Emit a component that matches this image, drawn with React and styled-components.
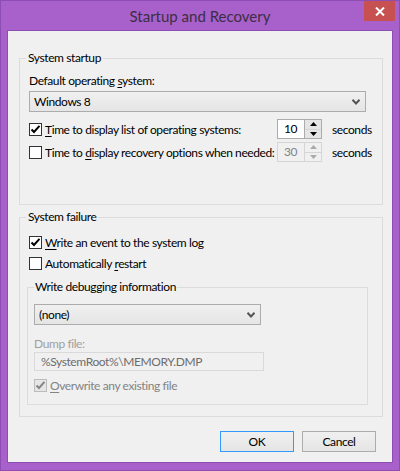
import styled, { createGlobalStyle } from 'styled-components'

const GlobalStyle = createGlobalStyle`
  html, body {
    margin: 0;
    padding: 0;
    background: #a860cb;
  }
  body {
    font-family: 'Segoe UI', Lato, 'Noto Sans', sans-serif;
    font-size: 12px;
    color: #000;
  }
`

const Frame = styled.div`
  width: 400px;
  height: 471px;
  box-sizing: border-box;
  background: #a860cb;
  border: 1px solid #8e4db2;
  padding: 0 6px 7px;
  display: flex;
  flex-direction: column;
`

const TitleBar = styled.div`
  height: 29px;
  position: relative;
  display: flex;
  align-items: center;
  justify-content: center;
`

const Title = styled.span`
  font-size: 15px;
  color: #3a2f42;
  margin-top: 1px;
`

const CloseButton = styled.div`
  position: absolute;
  top: 0;
  right: -2px;
  width: 31px;
  height: 20px;
  background: #c75050;
  display: flex;
  align-items: center;
  justify-content: center;
`

const Client = styled.div`
  flex: 1;
  background: #f0f0f0;
  border: 1px solid #8e4db2;
  padding: 20px 9px 0 11px;
  display: flex;
  flex-direction: column;
  letter-spacing: -0.4px;
`

const Group = styled.fieldset`
  margin: ${p => p.$margin || '0'};
  padding: ${p => p.$pad};
  border: 1px solid #dcdcdc;
  min-width: 0;
  display: flex;
  flex-direction: column;
`

const Legend = styled.legend`
  font-size: 12px;
  line-height: 14px;
  padding: 0 ${p => p.$padX || '2px'};
  margin-left: ${p => p.$shift || '0'};
`

const Text = styled.div`
  line-height: ${p => p.$lh || '15px'};
  margin-top: ${p => p.$mt || '0'};
  color: ${p => (p.$disabled ? '#a0a0a0' : '#000')};
  white-space: nowrap;
`

const Combo = styled.div`
  box-sizing: border-box;
  width: ${p => p.$w};
  height: 21px;
  margin-top: ${p => p.$mt || '0'};
  border: 1px solid #acacac;
  background: linear-gradient(#f0f0f0, #e5e5e5);
  display: flex;
  align-items: center;
  justify-content: space-between;
  padding: 0 5px 0 4px;
  line-height: 15px;
`

const Row = styled.div`
  display: flex;
  align-items: center;
  height: ${p => p.$h || '15px'};
  margin-top: ${p => p.$mt || '0'};
  white-space: nowrap;
`

const Box = styled.span`
  box-sizing: border-box;
  width: 13px;
  height: 13px;
  flex: none;
  border: 1px solid ${p => (p.$disabled ? '#bcbcbc' : '#333')};
  background: ${p => (p.$disabled ? '#e6e6e6' : '#fff')};
  display: flex;
  align-items: center;
  justify-content: center;
`

const CheckLabel = styled.span`
  margin-left: 3px;
  line-height: 15px;
  width: ${p => p.$w || 'auto'};
  flex: none;
  color: ${p => (p.$disabled ? '#838383' : '#000')};
`

const Key = styled.u`
  text-decoration-thickness: 1px;
  text-underline-offset: 2px;
`

const Spinner = styled.div`
  box-sizing: border-box;
  width: 45px;
  height: 20px;
  flex: none;
  border: 1px solid ${p => (p.$disabled ? '#d5d5d5' : '#acacac')};
  background: ${p => (p.$disabled ? '#f0f0f0' : '#fff')};
  display: flex;
`

const SpinValue = styled.span`
  flex: 1;
  padding-left: 6px;
  line-height: 18px;
  color: ${p => (p.$disabled ? '#838383' : '#000')};
`

const SpinButtons = styled.div`
  width: 16px;
  display: flex;
  flex-direction: column;
  background: ${p => (p.$disabled ? '#f0f0f0' : '#e5e5e5')};
  border-left: 1px solid ${p => (p.$disabled ? '#d5d5d5' : '#acacac')};
`

const SpinButton = styled.div`
  flex: 1;
  display: flex;
  align-items: center;
  justify-content: center;
  & + & {
    border-top: 1px solid ${p => (p.$disabled ? '#d5d5d5' : '#acacac')};
  }
`

const Unit = styled.span`
  margin-left: 10px;
  line-height: 15px;
`

const Field = styled.div`
  box-sizing: border-box;
  width: 230px;
  height: 19px;
  margin-top: 1px;
  border: 1px solid #d9d9d9;
  background: #f0f0f0;
  color: #6d6d6d;
  line-height: 17px;
  padding-left: 6px;
`

const Buttons = styled.div`
  display: flex;
  justify-content: flex-end;
  gap: 8px;
  margin: 14px 7px 0 0;
`

const Button = styled.div`
  box-sizing: border-box;
  width: 74px;
  height: 21px;
  border: 1px solid ${p => (p.$default ? '#3399ff' : '#acacac')};
  background: linear-gradient(#f0f0f0, #e5e5e5);
  display: flex;
  align-items: center;
  justify-content: center;
  line-height: 15px;
`

const Check = ({ disabled }) => (
  <Box $disabled={disabled}>
    <svg width="11" height="11" viewBox="0 0 11 11">
      <path d="M1.5 5.5 L4 8 L9.5 1.8" fill="none" stroke={disabled ? '#858585' : '#000'} strokeWidth="2" />
    </svg>
  </Box>
)

const Chevron = () => (
  <svg width="8" height="6" viewBox="0 0 8 6">
    <path d="M0.5 0.8 L4 4.5 L7.5 0.8" fill="none" stroke="#555" strokeWidth="2" />
  </svg>
)

const Arrow = ({ up, disabled }) => (
  <svg width="7" height="4" viewBox="0 0 7 4">
    <path d={up ? 'M0 4 L3.5 0 L7 4 Z' : 'M0 0 L3.5 4 L7 0 Z'} fill={disabled ? '#aaa' : '#000'} />
  </svg>
)

const Spin = ({ value, disabled }) => (
  <Spinner $disabled={disabled}>
    <SpinValue $disabled={disabled}>{value}</SpinValue>
    <SpinButtons $disabled={disabled}>
      <SpinButton $disabled={disabled}><Arrow up disabled={disabled} /></SpinButton>
      <SpinButton $disabled={disabled}><Arrow disabled={disabled} /></SpinButton>
    </SpinButtons>
  </Spinner>
)

export default function App() {
  return (
    <>
      <GlobalStyle />
      <Frame>
        <TitleBar>
          <Title>Startup and Recovery</Title>
          <CloseButton>
            <svg width="10" height="9" viewBox="0 0 10 9">
              <path d="M1 0.5 L9 8.5 M9 0.5 L1 8.5" stroke="#fff" strokeWidth="2" />
            </svg>
          </CloseButton>
        </TitleBar>
        <Client>
          <Group $pad="8px 16px 42px 9px">
            <Legend $shift="-3px">System startup</Legend>
            <Text>Default operating <Key>s</Key>ystem:</Text>
            <Combo $w="337px" $mt="3px">
              <span>Windows 8</span>
              <Chevron />
            </Combo>
            <Row $h="20px" $mt="7px">
              <Check />
              <CheckLabel $w="232px"><Key>T</Key>ime to display list of operating systems:</CheckLabel>
              <Spin value="10" />
              <Unit>seconds</Unit>
            </Row>
            <Row $h="20px" $mt="3px">
              <Box />
              <CheckLabel $w="232px">Time to <Key>d</Key>isplay recovery options when needed:</CheckLabel>
              <Spin value="30" disabled />
              <Unit>seconds</Unit>
            </Row>
          </Group>
          <Group $margin="5px 0 0" $pad="11px 14px 11px 9px">
            <Legend $shift="-3px">System failure</Legend>
            <Row>
              <Check />
              <CheckLabel><Key>W</Key>rite an event to the system log</CheckLabel>
            </Row>
            <Row $mt="6px">
              <Box />
              <CheckLabel>Automatically <Key>r</Key>estart</CheckLabel>
            </Row>
            <Group $margin="9px 0 0 -2px" $pad="10px 6px 11px 6px">
              <Legend $padX="1px">Write debugging information</Legend>
              <Combo $w="227px">
                <span>(none)</span>
                <Chevron />
              </Combo>
              <Text $disabled $lh="14px" $mt="12px">Dump file:</Text>
              <Field>%SystemRoot%\MEMORY.DMP</Field>
              <Row $mt="7px">
                <Check disabled />
                <CheckLabel $disabled><Key>O</Key>verwrite any existing file</CheckLabel>
              </Row>
            </Group>
          </Group>
          <Buttons>
            <Button $default>OK</Button>
            <Button>Cancel</Button>
          </Buttons>
        </Client>
      </Frame>
    </>
  )
}
